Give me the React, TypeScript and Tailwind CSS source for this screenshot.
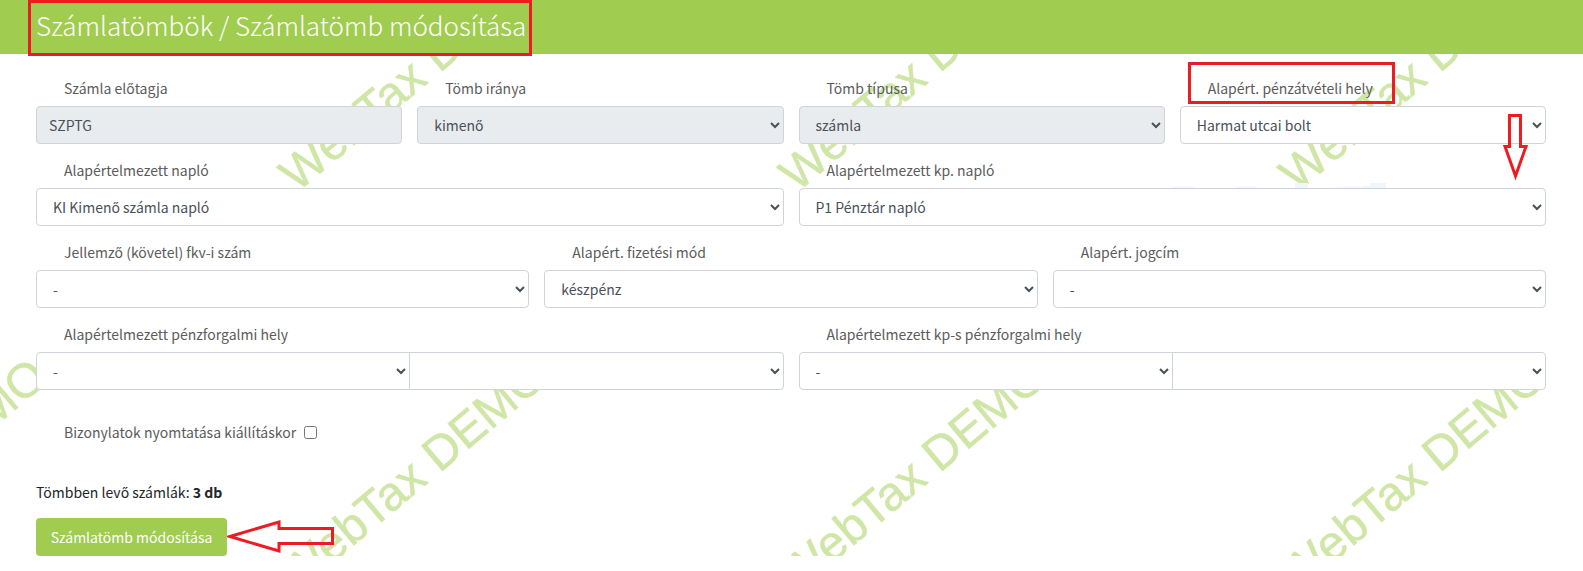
import React from 'react';

type Option = string;

interface SelectProps {
  id: string;
  options: Option[];
  disabled?: boolean;
  className?: string;
  label?: string;
}

function Select({ id, options, disabled, className = 'rounded', label }: SelectProps) {
  return (
    <select
      id={id}
      aria-label={label}
      disabled={disabled}
      className={`h-[38px] w-full min-w-0 border border-[#ced4da] bg-white px-3 text-[#495057] disabled:bg-[#e9ecef] disabled:opacity-100 ${className}`}
    >
      {options.map((o) => (
        <option key={o}>{o}</option>
      ))}
    </select>
  );
}

interface FieldProps {
  id: string;
  label: string;
  marked?: boolean;
  children: React.ReactNode;
}

function Field({ id, label, marked, children }: FieldProps) {
  return (
    <div className="flex min-w-0 flex-col">
      <div className="flex h-9 items-center pl-7">
        <label htmlFor={id} className="relative">
          {label}
          {marked && <span className="absolute -top-4 -right-[22px] -bottom-1.5 -left-5 border-3 border-[#ed1c24]" />}
        </label>
      </div>
      {children}
    </div>
  );
}

function Watermark() {
  return (
    <svg className="absolute inset-0 h-full w-full" aria-hidden="true">
      <defs>
        <pattern id="demo" width="500" height="400" patternUnits="userSpaceOnUse">
          {[-203, 297].map((x) =>
            [139, 539].map((y) => (
              <text
                key={`${x}-${y}`}
                transform={`translate(${x} ${y}) rotate(-40)`}
                fontSize="48"
                fill="#cfe6a7"
                stroke="#cfe6a7"
                strokeWidth="0.5"
                className="font-['Liberation_Sans',sans-serif]"
              >
                WebTax DEMO
              </text>
            ))
          )}
        </pattern>
      </defs>
      <rect width="100%" height="100%" fill="url(#demo)" />
    </svg>
  );
}

export default function App() {
  return (
    <div className="bg-white font-['Noto_Sans_CJK_SC','Noto_Sans',sans-serif] text-sm text-[#5b5b5b]">
      <header className="relative z-10 flex h-[54px] items-start bg-[#a0cc50] px-9">
        <h1 className="relative text-[26px] leading-[50px] font-light text-white">
          Számlatömbök / Számlatömb módosítása
          <span className="absolute top-0 -right-1.5 -bottom-1.5 -left-2 border-3 border-[#ed1c24]" />
        </h1>
      </header>

      <main className="relative overflow-hidden">
        <Watermark />
        <form className="relative flex flex-col gap-2 pt-4 pr-[37px] pl-9" onSubmit={(e) => e.preventDefault()}>
          <div className="grid grid-cols-4 gap-[15px]">
            <Field id="prefix" label="Számla előtagja">
              <input
                id="prefix"
                readOnly
                defaultValue="SZPTG"
                className="h-[38px] w-full rounded border border-[#ced4da] bg-[#e9ecef] px-3 text-[#495057]"
              />
            </Field>
            <Field id="direction" label="Tömb iránya">
              <Select id="direction" disabled options={['kimenő']} />
            </Field>
            <Field id="type" label="Tömb típusa">
              <Select id="type" disabled options={['számla']} />
            </Field>
            <Field id="place" label="Alapért. pénzátvételi hely" marked>
              <div className="relative">
                <Select id="place" options={['Harmat utcai bolt']} />
                <svg className="pointer-events-none absolute top-2 right-4 z-10 h-[66px] w-7" viewBox="0 0 28 66" fill="none" stroke="#ed1c24" strokeWidth="3">
                  <path d="M7.5 1.5H18.5V32.5H24L13.5 62L3 32.5H7.5Z" />
                </svg>
              </div>
            </Field>
          </div>

          <div className="grid grid-cols-2 gap-[15px]">
            <Field id="journal" label="Alapértelmezett napló">
              <Select id="journal" options={['KI Kimenő számla napló']} />
            </Field>
            <Field id="cash-journal" label="Alapértelmezett kp. napló">
              <div className="relative">
                <svg className="pointer-events-none absolute -top-1.5 left-1/2 h-2 w-[214px]" viewBox="0 0 214 8" fill="#eff7fd">
                  <path d="M0 5H22V6H64V5H84V6H123V1H136V6H165V5H190V4H198V1H214V7H0Z" />
                </svg>
                <Select id="cash-journal" options={['P1 Pénztár napló']} className="relative rounded" />
              </div>
            </Field>
          </div>

          <div className="grid grid-cols-3 gap-[15px]">
            <Field id="account" label="Jellemző (követel) fkv-i szám">
              <Select id="account" options={['-']} />
            </Field>
            <Field id="payment" label="Alapért. fizetési mód">
              <Select id="payment" options={['készpénz']} />
            </Field>
            <Field id="legal" label="Alapért. jogcím">
              <Select id="legal" options={['-']} />
            </Field>
          </div>

          <div className="grid grid-cols-2 gap-[15px]">
            <Field id="flow" label="Alapértelmezett pénzforgalmi hely">
              <div className="flex">
                <Select id="flow" options={['-']} className="rounded-l" />
                <Select id="flow-sub" label="Pénzforgalmi hely részletezése" options={['']} className="-ml-px rounded-r" />
              </div>
            </Field>
            <Field id="cash-flow" label="Alapértelmezett kp-s pénzforgalmi hely">
              <div className="flex">
                <Select id="cash-flow" options={['-']} className="rounded-l" />
                <Select id="cash-flow-sub" label="Kp-s pénzforgalmi hely részletezése" options={['']} className="-ml-px rounded-r" />
              </div>
            </Field>
          </div>

          <div className="mt-4 flex h-9 items-center gap-2 pl-7">
            <label htmlFor="print">Bizonylatok nyomtatása kiállításkor</label>
            <input id="print" type="checkbox" className="h-[13px] w-[13px]" />
          </div>

          <p className="mt-4 leading-9 text-[#212529]">
            Tömbben levő számlák: <strong>3 db</strong>
          </p>

          <div className="flex">
            <div className="relative">
              <button type="submit" className="h-[38px] min-w-[191px] rounded bg-[#a0cc50] px-3 text-white">
                Számlatömb módosítása
              </button>
              <svg className="pointer-events-none absolute top-0 left-full h-9 w-[108px]" viewBox="0 0 108 36" fill="none" stroke="#ed1c24" strokeWidth="3">
                <path d="M3 18.5L52 4V10.5H105.5V25.5H52V33Z" />
              </svg>
            </div>
          </div>
        </form>
      </main>
    </div>
  );
}
